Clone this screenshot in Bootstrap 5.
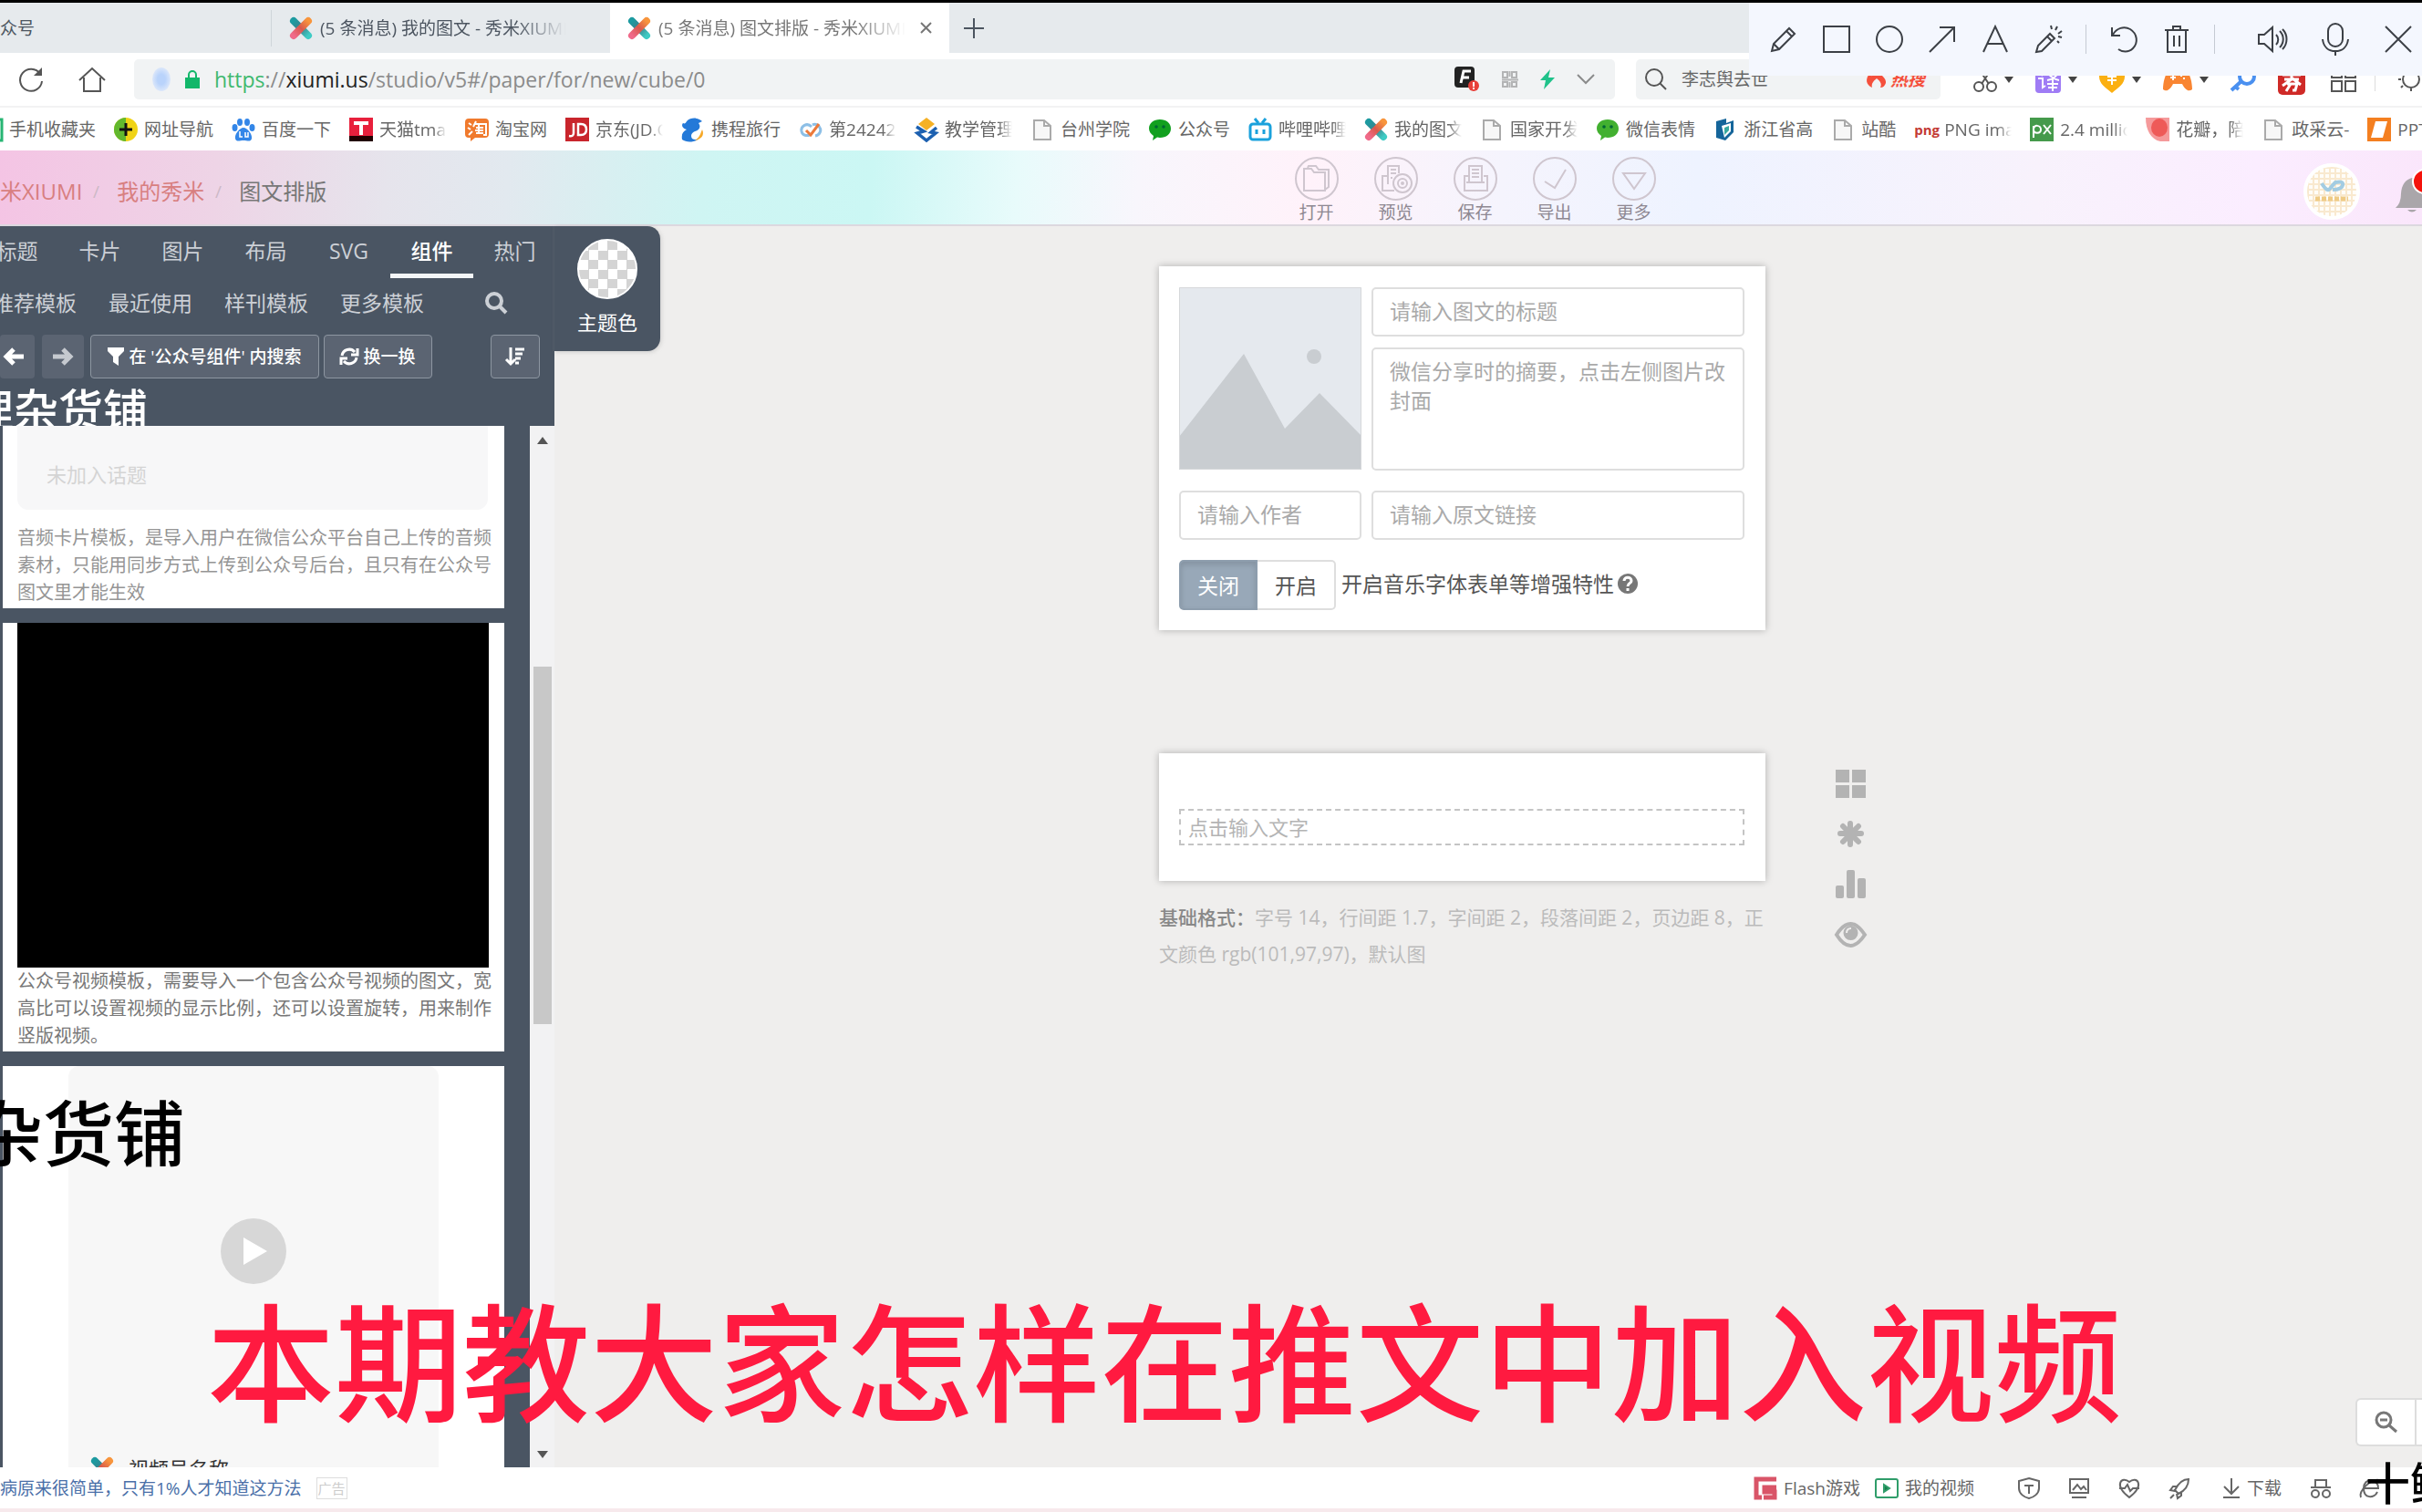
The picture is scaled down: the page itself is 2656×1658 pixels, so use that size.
<!DOCTYPE html>
<html lang="zh-CN">
<head>
<meta charset="utf-8">
<meta name="viewport" content="width=device-width, initial-scale=1">
<title>图文排版 - 秀米XIUMI</title>
<link href="https://cdn.jsdelivr.net/npm/bootstrap@5.3.0/dist/css/bootstrap.min.css" rel="stylesheet">
<style>
  body { font-family: "Open Sans", "Noto Sans CJK SC", sans-serif; font-size: 19px; line-height: 30px; color: #555; background: #efeeed; }
  a { color: inherit; text-decoration: none; }
  svg { display: block; flex: none; overflow: visible; }
  button { font: inherit; color: inherit; border: 0; background: none; padding: 0; }
  .ln { fill: none; stroke: currentColor; stroke-width: 2; }

  /* browser chrome */
  .tabstrip { height: 58px; background: #e6eaed; border-top: 3px solid #000; color: #4c5560; }
  .tab-a { width: 298px; border-right: 1px solid #cfd5da; height: 40px; }
  .tab-b { width: 371px; padding: 0 48px 0 19px; }
  .tab-c { width: 372px; padding: 0 19px; background: #fff; color: #777; }
  .fade-end { overflow: hidden; -webkit-mask-image: linear-gradient(90deg, #000 80%, transparent); mask-image: linear-gradient(90deg, #000 80%, transparent); }
  .addr { height: 60px; background: #fff; border-bottom: 2px solid #f2f2f3; color: #555; }
  .nav-ic { width: 67px; }
  .urlbox { height: 44px; background: #f1f3f4; border-radius: 5px; margin-left: 13px; padding: 0 22px 0 20px; font-size: 23px; color: #8b8b8b; }
  .urlbox b { font-weight: 400; color: #222; }
  .urlbox i { font-style: normal; color: #3fb96f; }
  .glow { width: 20px; height: 26px; border-radius: 50%; background: radial-gradient(#b9d3fb 30%, #dfe9fa 75%); }
  .hotbox { width: 334px; height: 44px; background: #f1f3f4; border-radius: 5px; margin-left: 23px; padding: 0 17px 0 10px; }
  .hotbox input { border: 0; background: none; width: 160px; padding: 0; color: #666; }
  .hot { color: #f5503c; font-weight: 700; font-style: italic; }
  .exts { width: 528px; padding-left: 36px; }
  .caret { border: 5px solid transparent; border-top: 7px solid #444; border-bottom: 0; margin-left: 8px; }
  .exts .sep { width: 1px; height: 26px; background: #ddd; margin: 0 13px 0 20px; flex: none; }
  .marks { height: 47px; background: #fff; color: #666; gap: 20px; }
  .marks a { display: flex; align-items: center; gap: 7px; flex: none; }
  .marks a:first-child { margin-left: -23px; }
  .marks svg { width: 26px; height: 26px; }
  .marks .fade-end { width: 74px; }

  .drawbar { position: absolute; top: 3px; right: 0; width: 738px; height: 80px; background: #f4f7fe; color: #3c4046; padding-left: 9px; overflow: hidden; z-index: 5; }
  .drawbar button { width: 58px; flex: none; display: flex; justify-content: center; }
  .drawbar .wide { width: 69px; }
  .drawbar .bar { width: 1px; height: 32px; background: #c5cad3; margin: 0 12px; flex: none; }

  /* site header */
  .sitebar { height: 83px; border-bottom: 2px solid #dcd8df; background: linear-gradient(94deg, #f4c4e4 0, #eed4e6 9%, #e6e4ec 16%, #e2e9ef 21%, #cff5f3 29%, #cbf7f4 36%, #e8fbfb 42%, #f8f6fc 47%, #fff2fa 54%, #f5f4fd 62%, #eef3ff 70%, #f8f2fc 84%, #fbedff 93%, #fae6fb 100%); }
  .crumbs { width: 1400px; font-size: 24px; color: #777; padding-top: 9px; }
  .crumbs a { color: #d87f80; }
  .crumbs a.home { margin-left: -24px; }
  .crumbs span { font-size: 19px; color: #ccb9c6; width: 38px; text-align: center; padding-right: 8px; }
  .acts a { width: 87px; display: flex; flex-direction: column; align-items: center; line-height: 26px; padding-top: 7px; color: #8e8892; }
  .acts svg { color: #cfc6cf; }
  .avatar { width: 62px; height: 62px; border-radius: 50%; border: 4px solid #fff; background: repeating-linear-gradient(90deg, #f9e9cf 0 2px, transparent 2px 6px), repeating-linear-gradient(#f9e9cf 0 2px, #fffdf8 2px 6px); }

  /* template drawer */
  .drawer { width: 608px; background: #4a5563; color: #ccd0d6; font-size: 23px; }
  .kinds { margin-left: -27px; width: 637px; height: 57px; }
  .kinds a { width: 91px; height: 57px; padding-top: 12px; text-align: center; border-bottom: 5px solid transparent; }
  .kinds a.on { color: #fff; font-weight: 500; border-bottom-color: #f4f6f8; }
  .subs { height: 55px; gap: 35px; margin-left: -8px; padding-right: 52px; padding-bottom: 2px; }
  .tools { height: 62px; padding: 7px 16px 7px 0; font-size: 19px; font-weight: 500; color: #fff; }
  .tools button { height: 48px; background: #5b6472; border-radius: 4px; display: flex; align-items: center; justify-content: center; gap: 5px; }
  .tools .edged { border: 1px solid #8d96a1; }
  .shopname { height: 45px; font-size: 49px; line-height: 54px; font-weight: 500; color: #fff; margin-left: -34px; white-space: nowrap; }
  .list { padding-left: 3px; gap: 16px; font-size: 20px; }
  .tpl { width: 550px; background: #fff; padding: 0 14px 2px 16px; color: #777; flex: none; }
  .tpl.pale { color: #959595; }
  .tpl.last { flex: 1 0 0; padding: 0 72px; overflow: hidden; }
  .topic { height: 92px; margin: 0 4px 16px 0; padding: 38px 32px 0; background: #f7f7f8; border-radius: 0 0 12px 12px; font-size: 22px; color: #d4d4d4; }
  .video { height: 378px; background: #000; margin-right: 3px; }
  .channel { height: 100%; background: #f7f7f7; border-radius: 12px 12px 0 0; padding-top: 167px; }
  .play { width: 72px; height: 72px; border-radius: 50%; background: #d7d7d7; margin: 0 auto 187px; }
  .who { gap: 16px; padding-left: 24px; font-size: 22px; color: #333; }
  .sbar { width: 27px; background: #f2f2f3; padding: 12px 0 10px; }
  .sbar .thumb { width: 20px; height: 392px; background: #c8c8c8; margin-top: 244px; }
  .sbar .up { border: 6px solid transparent; border-bottom: 8px solid #555; border-top: 0; }
  .sbar .dn { border: 6px solid transparent; border-top: 8px solid #555; border-bottom: 0; margin-top: auto; }
  .theme { position: absolute; left: 608px; top: 0; width: 116px; height: 137px; background: #4a5563; border-radius: 0 14px 14px 0; color: #fff; font-size: 22px; padding-top: 14px; z-index: 2; box-shadow: 1px 1px 4px #9996; }
  .swatch { width: 66px; height: 66px; border-radius: 50%; border: 2px solid #fff; background: repeating-conic-gradient(#d4d4d4 0 25%, #fff 0 50%) 0 0 / 21px 21px; margin: 0 auto 10px; }

  /* editor */
  .stage { padding: 44px 57px 0 0; display: grid; grid-template-columns: minmax(0, 1fr) 665px minmax(0, 1fr); align-content: start; row-gap: 135px; overflow: hidden; }
  .mid { grid-column: 2; }
  .sheet { background: #fff; box-shadow: 0 0 8px #0004; }
  .meta { padding: 23px 23px 22px 22px; display: grid; grid-template-columns: 200px 1fr; column-gap: 11px; row-gap: 22px; font-size: 23px; }
  .meta .form-control { height: 54px; padding: 9px 18px 11px; font-size: 23px; line-height: 32px; border: 2px solid #dedede; border-radius: 5px; color: #555; background: #fff; }
  .meta .form-control::placeholder { color: #aaa; opacity: 1; }
  .meta textarea.form-control { height: 135px; resize: none; padding: 8px 18px; }
  .onoff label { width: 86px; height: 55px; border: 2px solid #dedede; display: flex; align-items: center; justify-content: center; color: #555; }
  .onoff label:first-of-type { background: #98a8b8; border-color: #8d9dad; color: #fff; border-radius: 5px 0 0 5px; box-shadow: inset 0 3px 6px #0002; }
  .onoff label:last-of-type { border-left: 0; border-radius: 0 5px 5px 0; }
  .onoff .hint { margin-left: 6px; padding-bottom: 3px; }
  .paper { padding: 61px 23px 39px 22px; }
  .typein { height: 40px; width: 100%; border: 2px dashed #c4c4c4; padding: 0 8px; font-size: 22px; background: none; }
  .typein::placeholder { color: #b4b4b4; }
  .fmt { margin: 20px 0 0; font-size: 21px; line-height: 40px; color: #bbb; }
  .fmt b { font-weight: 500; color: #888; }
  .rail { padding: 6px 0 0 63px; color: #b3b3b3; }
  .rail button { display: flex; width: 60px; height: 55px; align-items: center; justify-content: center; }
  .zoomer { position: absolute; right: -57px; bottom: 23px; }
  .zoomer button { width: 65px; height: 53px; background: #fff; border: 2px solid #ddd; display: flex; align-items: center; justify-content: center; color: #777; }
  .zoomer button:first-child { border-radius: 6px 0 0 6px; border-right: 0; }

  .foot { height: 49px; background: #fff; border-bottom: 4px solid #f7e9ec; color: #666; }
  .foot .ad { font-size: 15px; line-height: 22px; border: 1px solid #ddd; color: #ccc; padding: 0 1px; }
  .foot a, .foot button { display: flex; align-items: center; gap: 7px; }

  /* video captions */
  .cap { position: absolute; white-space: nowrap; font-weight: 500; z-index: 6; pointer-events: none; }
  .cap-red { left: 227px; bottom: 94px; font-size: 140px; line-height: 140px; color: #ff1a40; }
  .cap-shop { left: -31px; top: 1200px; font-size: 78px; line-height: 86px; color: #000; }
  .cap-ten { left: 2594px; bottom: 2px; font-size: 49px; line-height: 60px; color: #000; }
</style>
</head>
<body class="vh-100 d-flex flex-column overflow-hidden position-relative">

<svg width="0" height="0" class="position-absolute">
  <defs>
    <linearGradient id="ga" x1="0" y1="0" x2="1" y2="1"><stop offset="0" stop-color="#1d9aa0"/><stop offset=".5" stop-color="#3f7f8a"/><stop offset="1" stop-color="#3ecbc4"/></linearGradient>
    <linearGradient id="gb" x1="1" y1="0" x2="0" y2="1"><stop offset="0" stop-color="#f8953c"/><stop offset=".5" stop-color="#d9584c"/><stop offset="1" stop-color="#f06a8a"/></linearGradient>
    <symbol id="xm" viewBox="0 0 26 26"><path d="M5 5 21 21" stroke="url(#ga)" stroke-width="8" stroke-linecap="round"/><path d="M21 5 14 12M12 14 5 21" stroke="url(#gb)" stroke-width="8" stroke-linecap="round"/></symbol>
    <symbol id="pg" viewBox="0 0 26 26"><path d="M4 3h11l7 6v15H4z M15 3v6h7" fill="#f7f7f7" stroke="#aaa" stroke-width="2"/></symbol>
    <symbol id="wx" viewBox="0 0 26 26"><path d="M13 2c7 0 12 4 12 10s-5 10-12 10l-3-.4L5 25l1-5C3 18 1 15 1 12 1 6 6 2 13 2z"/><circle cx="9" cy="10" r="1.8" fill="#063"/><circle cx="17" cy="10" r="1.8" fill="#063"/></symbol>
  </defs>
</svg>

<div class="tabstrip d-flex align-items-center flex-shrink-0">
  <a href="#" class="tab-a d-flex align-items-center">众号</a>
  <a href="#" class="tab-b d-flex align-items-center gap-2"><svg width="26" height="26"><use href="#xm"/></svg><span class="fade-end text-nowrap">(5 条消息) 我的图文 - 秀米XIUMI</span></a>
  <div class="tab-c d-flex align-items-center h-100"><svg width="26" height="26"><use href="#xm"/></svg><span class="fade-end text-nowrap ms-2 me-3">(5 条消息) 图文排版 - 秀米XIUMI</span>
    <button class="flex-shrink-0" aria-label="关闭标签"><svg class="ln" width="13" height="13"><path d="M1 1 12 12M12 1 1 12"/></svg></button></div>
  <button class="ms-3" aria-label="新标签"><svg class="ln" width="22" height="22"><path d="M11 0v22M0 11h22"/></svg></button>
</div>

<div class="drawbar d-flex align-items-center">
  <button aria-label="画笔"><svg class="ln" width="30" height="30"><path d="M2 28 4 20 21 3l6 6L10 26z M18 6l6 6M4 20l6 6"/></svg></button>
  <button aria-label="矩形"><svg class="ln" width="30" height="30"><rect x="1" y="1" width="28" height="28"/></svg></button>
  <button aria-label="圆形"><svg class="ln" width="30" height="30"><circle cx="15" cy="15" r="14"/></svg></button>
  <button aria-label="箭头"><svg class="ln" width="30" height="30"><path d="M1 29 28 2M12 2h16v16"/></svg></button>
  <button aria-label="文字"><svg class="ln" width="30" height="30"><path d="M2 29 15 1l13 28M6 20h18"/></svg></button>
  <button aria-label="魔棒"><svg class="ln" width="30" height="30"><path d="M2 29 4 22 17 9l5 5L8 28z M14 12l5 5M18 0l1 4M25 1l-2 4M30 6l-4 3M30 13l-4-1M27 19l-2-2"/></svg></button>
  <span class="bar"></span>
  <button aria-label="撤销"><svg class="ln" width="30" height="30"><path d="M2 2v9h9M3 10C7 3 15 0 22 4c8 5 9 15 3 21-5 5-12 4-16 1"/></svg></button>
  <button aria-label="删除"><svg class="ln" width="26" height="30"><path d="M0 5h26M9 5V1h8v4M3 5v24h20V5M10 11v12M16 11v12"/></svg></button>
  <span class="bar"></span><span class="me-3"></span>
  <button class="wide" aria-label="声音"><svg class="ln" width="32" height="30"><path d="M1 10h6l9-8v26l-9-8H1zM20 10c3 3 3 8 0 11M24 6c5 5 5 13 0 18M27 4c6 6 6 16 0 22"/></svg></button>
  <button class="wide" aria-label="麦克风"><svg class="ln" width="32" height="36"><rect x="8" y="1" width="16" height="25" rx="8"/><path d="M2 18c1 9 7 13 14 13s13-4 14-13M16 31v5"/></svg></button>
  <button class="wide" aria-label="关闭"><svg class="ln" width="30" height="30"><path d="M1 1 29 29M29 1 1 29"/></svg></button>
</div>

<div class="addr d-flex align-items-center flex-shrink-0">
  <button class="nav-ic d-flex justify-content-center" aria-label="刷新"><svg class="ln" width="28" height="28"><path d="M24 8a12 12 0 1 0 2 8"/><path d="M26 1v9h-9z" fill="currentColor" stroke="none"/></svg></button>
  <button class="nav-ic d-flex justify-content-center" aria-label="主页"><svg class="ln" width="30" height="28"><path d="M1 15 15 2l14 13M6 12v15h18V12"/></svg></button>
  <div class="urlbox d-flex align-items-center flex-grow-1">
    <span class="glow"></span>
    <svg class="ms-3" width="16" height="20"><path d="M0 8h16v12H0z" fill="#12b76a"/><path d="M4 9V5a4 4 0 0 1 8 0v4" fill="none" stroke="#12b76a" stroke-width="2"/></svg>
    <span class="ms-3 me-auto"><i>https</i>://<b>xiumi.us</b>/studio/v5#/paper/for/new/cube/0</span>
    <svg width="28" height="28"><rect width="22" height="23" rx="4" fill="#222"/><path d="M7 18 10 5h8M8 12h8" stroke="#fff" stroke-width="3" fill="none"/><circle cx="21" cy="21" r="6" fill="#e8403a"/><path d="M21 17v5M21 23v2" stroke="#fff" stroke-width="2"/></svg>
    <svg class="ln ms-4" width="18" height="18" stroke-opacity=".6"><path d="M1 1h5v6H1zM11 1h5v6h-5zM1 12h5v5H1zM11 12h5v5h-5zM0 9.500h18M8.500 0v6M8.500 12v6"/></svg>
    <svg class="ms-4" width="16" height="22"><path d="M11 0 0 12h6l-2 10L16 9H9z" fill="#1fc28a"/></svg>
    <svg class="ln ms-4" width="20" height="12"><path d="M1 1l9 9 9-9"/></svg>
  </div>
  <div class="hotbox d-flex align-items-center">
    <svg class="ln" width="24" height="24"><circle cx="10" cy="10" r="9"/><path d="M16 16l7 7"/></svg>
    <label class="visually-hidden" for="hs">搜索</label><input id="hs" class="ms-3" value="李志舆去世">
    <span class="hot ms-auto d-flex align-items-center"><svg width="22" height="18" class="me-1"><path d="M6 18C-1 15-2 8 4 2c0 4 2 4 3 1l3-3c5 3 12 8 11 13-1 3-3 5-6 5 2-4 0-7-4-10-4 3-6 6-5 10z" fill="#f5503c"/></svg>热搜</span>
  </div>
  <div class="exts d-flex align-items-center flex-shrink-0">
    <svg class="ln" width="26" height="28"><path d="M5 1l12 18M21 1 9 19"/><circle cx="6" cy="22" r="5"/><circle cx="20" cy="22" r="5"/></svg><span class="caret"></span>
    <svg class="ms-4" width="28" height="30"><rect width="28" height="30" rx="4" fill="#9f7cf5"/><path d="M4 8l4 3M3 14h5v10l3-2M13 7h12c-2 6-6 8-12 9M14 8c3 5 7 7 12 8M13 20h12M19 15v13M14 24h10" stroke="#fff" stroke-width="2" fill="none"/></svg><span class="caret"></span>
    <svg class="ms-4" width="28" height="30"><path d="M0 0h28v12c0 8-7 12-14 18C7 24 0 20 0 12z" fill="#fbb012"/><path d="M9 4l5 6 5-6M14 10v11M9 12h10M9 16h10" stroke="#fff" stroke-width="2" fill="none"/></svg><span class="caret"></span>
    <svg class="ms-4" width="32" height="28"><path d="M8 3c5 2 11 2 16 0 6 4 8 15 8 22-5 4-9-2-11-6H11C9 23 5 29 0 25 0 18 2 7 8 3z" fill="#f98532"/><path d="M8 12h6M11 9v6M19 10h2M22 13h2" stroke="#fff" stroke-width="2"/></svg><span class="caret"></span>
    <svg class="ms-4" width="28" height="28"><circle cx="18" cy="11" r="8" fill="none" stroke="#4a90f0" stroke-width="4"/><path d="M12 16 1 26M5 22l4 3" stroke="#4a90f0" stroke-width="4"/></svg>
    <svg class="ms-4" width="30" height="34"><rect width="30" height="34" rx="5" fill="#cf2a27"/><path d="M8 6l3 5M22 6l-3 5M5 12h20M7 17h16M15 7v10L5 24M16 16l9 7M10 22h11l-2 7h-3M14 22l-5 8" stroke="#fff" stroke-width="3" fill="none"/></svg>
    <svg class="ln" width="28" height="28" style="margin-left:28px"><path d="M1 1h11v11H1zM16 1h11v11H16zM1 16h11v11H1zM16 16h11v11H16z"/></svg>
    <span class="sep"></span>
    <svg class="ln" width="28" height="28"><circle cx="26" cy="14" r="9"/><path d="M12 14h3M26 24v3M15 23l2-2"/></svg>
  </div>
</div>

<div class="marks d-flex align-items-center flex-shrink-0 overflow-hidden text-nowrap">
  <a href="#"><svg><rect x="2" y="2" width="23" height="23" fill="none" stroke="#27b573" stroke-width="3"/></svg>手机收藏夹</a>
  <a href="#"><svg><circle cx="13" cy="13" r="13" fill="#f0d315"/><path d="M13 0a13 13 0 0 0 0 26z" fill="#62b82e"/><path d="M13 6v14M6 13h14" stroke="#111" stroke-width="3"/></svg>网址导航</a>
  <a href="#"><svg fill="#3386e8"><ellipse cx="9" cy="5" rx="3" ry="4"/><ellipse cx="17" cy="5" rx="3" ry="4"/><ellipse cx="3.500" cy="11" rx="3" ry="4"/><ellipse cx="22.500" cy="11" rx="3" ry="4"/><path d="M13 11c4 0 10 7 9 12-1 4-5 2-9 2s-8 2-9-2c-1-5 5-12 9-12z"/><path d="M9 15v6h3M15 16v5h3v-5" stroke="#fff" fill="none" stroke-width="1.500"/></svg>百度一下</a>
  <a href="#"><svg><path d="M0 0h26v26H0z" fill="#e8203c"/><path d="M0 20h26v6H0z" fill="#200"/><path d="M5 6h16M13 6v13" stroke="#fff" stroke-width="4"/></svg><span class="fade-end">天猫tmall</span></a>
  <a href="#"><svg><path d="M4 1h18q4 0 4 4v13q0 4-4 4H11l-5 4v-4H4q-4 0-4-4V5q0-4 4-4z" fill="#f07a2d"/><path d="M4 6l3 2M3 11l3 2M4 19l4-4M12 4l-3 6M11 7h12v12h-3M12 11h8M11 14h9M15 8v9M12 17h8" stroke="#fff" stroke-width="2" fill="none"/></svg>淘宝网</a>
  <a href="#"><svg><path d="M0 0h26v26H0z" fill="#c9252c"/><path d="M9 6v11q0 4-5 3M14 7h3q6 0 6 6t-6 6h-3z" stroke="#fff" stroke-width="2.500" fill="none"/></svg><span class="fade-end">京东(JD.C</span></a>
  <a href="#"><svg><path d="M1 24C0 18 2 15 6 13 1 12 0 8 2 6c2 1 3 0 4-2 5-5 13-4 17 0l-4 2c3 4 1 8-4 9-4 2-5 5-3 8 3 2 6 1 8-1-3 5-14 6-19 2z" fill="#2479d8"/><path d="M23 13c3 6-1 11-8 12 5-3 6-7 8-12z" fill="#f7a928"/></svg>携程旅行</a>
  <a href="#"><svg fill="none" stroke-width="3"><path d="M14 10C9 5 2 9 3 15c1 5 6 5 9 4M15 8c3-2 7 0 8 3 2 3 0 8-5 9" stroke="#8dbfe6"/><path d="M8 14l5 5L22 7" stroke="#ec7a3b"/></svg><span class="fade-end">第242422</span></a>
  <a href="#"><svg><path d="M13 0l9 7-9 7-9-7z" fill="#f5b125"/><path d="M2 10l8 5-7 2 10 8 10-8-5-1 6-5" fill="none" stroke="#1c60b0" stroke-width="3.500"/></svg><span class="fade-end">教学管理系</span></a>
  <a href="#"><svg><use href="#pg"/></svg>台州学院</a>
  <a href="#"><svg fill="#12a01f"><use href="#wx"/></svg>公众号</a>
  <a href="#"><svg fill="none" stroke="#1aa1dc" stroke-width="3"><rect x="2" y="7" width="22" height="17" rx="3"/><path d="M7 1l4 5M19 1l-4 5M9 13v5M17 13v5"/></svg><span class="fade-end">哔哩哔哩干</span></a>
  <a href="#"><svg><use href="#xm"/></svg><span class="fade-end">我的图文</span></a>
  <a href="#"><svg><use href="#pg"/></svg><span class="fade-end">国家开发</span></a>
  <a href="#"><svg fill="#42b030"><use href="#wx"/></svg>微信表情</a>
  <a href="#"><svg><path d="M3 4 14 1v5l8-3v13l-9 9-10-3z" fill="#15659a"/><path d="M9 9l10-3v9l-7 7z" fill="#fff"/><path d="M12 11l5-2v5l-5 5z" fill="#39a9a0"/></svg>浙江省高</a>
  <a href="#"><svg><use href="#pg"/></svg>站酷</a>
  <a href="#"><b style="color:#c33a35;font-size:15px;width:26px">png</b><span class="fade-end">PNG image</span></a>
  <a href="#"><svg><path d="M0 0h26v26H0z" fill="#459a4b"/><path d="M4 22V9M4 13c0-6 8-5 8 0s-8 5-8 0M15 8l8 10M23 8l-8 10" stroke="#fff" stroke-width="2" fill="none"/></svg><span class="fade-end">2.4 million</span></a>
  <a href="#"><svg><path d="M0 0h26v26H16C6 24 0 14 0 0z" fill="#f59a9b"/><ellipse cx="15" cy="11" rx="9" ry="10" fill="#ee5a58"/></svg><span class="fade-end">花瓣，陪你</span></a>
  <a href="#"><svg><use href="#pg"/></svg>政采云-</a>
  <a href="#"><svg><path d="M0 0h26v26H0z" fill="#f47f20"/><path d="M9 4h13l-5 18H4z" fill="#fff"/></svg>PPT</a>
</div>

<header class="sitebar d-flex flex-shrink-0 overflow-hidden">
  <nav class="crumbs d-flex align-items-center flex-shrink-0" aria-label="breadcrumb">
    <a class="home" href="#">秀米XIUMI</a><span>/</span><a href="#">我的秀米</a><span>/</span>图文排版
  </nav>
  <div class="acts d-flex">
    <a href="#"><svg class="ln" width="48" height="48"><circle cx="24" cy="24" r="23"/><path d="M10 13h8l3 4h12v20H10zM14 12l1-2h8l3 4h11v19l-4 3"/></svg>打开</a>
    <a href="#"><svg class="ln" width="48" height="48"><circle cx="24" cy="24" r="23"/><path d="M14 21H9v16h13M15 30V10h12v8M18 14h6M18 18h6M18 23h2"/><circle cx="31" cy="29" r="10"/><circle cx="31" cy="29" r="5"/><circle cx="31" cy="29" r="1"/></svg>预览</a>
    <a href="#"><svg class="ln" width="48" height="48"><circle cx="24" cy="24" r="23"/><path d="M16 21h-4v16h25V21h-4M17 28V10h14v18M20 14h8M20 18h8M20 22h8M14 28h20"/></svg>保存</a>
    <a href="#"><svg class="ln" width="48" height="48"><circle cx="24" cy="24" r="23"/><path d="M13 27l11 7 12-20"/></svg>导出</a>
    <a href="#"><svg class="ln" width="48" height="48"><circle cx="24" cy="24" r="23"/><path d="M12 18h24L24 35z"/></svg>更多</a>
  </div>
  <div class="d-flex align-items-center ms-auto flex-shrink-0 pt-2">
    <a href="#" class="avatar d-block" aria-label="账号"><svg width="54" height="54"><path d="M16 18q6 10 9 6t6-7q9-2 8 3t-11 5" fill="none" stroke="#a3cce2" stroke-width="4"/><path d="M9 35h36" stroke="#efcb85" stroke-width="5" stroke-dasharray="5 2"/></svg></a>
    <svg width="30" height="52" style="margin-left:38px"><path d="M1 44q6-5 6-16 1-14 12-17 12 3 13 17 0 11 6 16z" fill="#aaa6aa"/><path d="M14 46q5 5 10 0z" fill="#aaa6aa"/><circle cx="33" cy="15" r="13" fill="#f5130c" stroke="#fff" stroke-width="2"/></svg>
  </div>
</header>

<div class="d-flex flex-grow-1 position-relative" style="min-height:0">
  <aside class="drawer d-flex flex-column flex-shrink-0">
    <div class="overflow-hidden flex-shrink-0">
      <nav class="kinds d-flex">
        <a href="#">标题</a><a href="#">卡片</a><a href="#">图片</a><a href="#">布局</a><a href="#">SVG</a><a href="#" class="on">组件</a><a href="#">热门</a>
      </nav>
    </div>
    <nav class="subs d-flex align-items-center text-nowrap flex-shrink-0">
      <a href="#">推荐模板</a><a href="#">最近使用</a><a href="#">样刊模板</a><a href="#">更多模板</a>
      <button class="ms-auto" aria-label="搜索"><svg width="24" height="24" fill="none" stroke="currentColor" stroke-width="4"><circle cx="10" cy="10" r="8"/><path d="M16 16l7 7"/></svg></button>
    </nav>
    <div class="tools d-flex flex-shrink-0">
      <button aria-label="后退" class="pe-2" style="width:38px"><svg width="22" height="20" fill="none" stroke="#fff" stroke-width="5"><path d="M22 10H4M11 2l-8 8 8 8"/></svg></button>
      <button class="ms-2" aria-label="前进" style="width:46px"><svg width="22" height="20" fill="none" stroke="#c5c9cf" stroke-width="5"><path d="M0 10h18M11 2l8 8-8 8"/></svg></button>
      <button class="edged text-nowrap" style="width:251px;margin-left:7px"><svg width="18" height="20" fill="#fff"><path d="M0 0h18v4l-6 6v10l-6-4v-6L0 4z"/></svg>在 '公众号组件' 内搜索</button>
      <button class="edged" style="width:119px;margin-left:5px"><svg width="20" height="20" fill="none" stroke="#fff" stroke-width="3"><path d="M2 9a8 8 0 0 1 14-4M18 11a8 8 0 0 1-14 4M19 1v7h-7M1 19v-7h7"/></svg>换一换</button>
      <button class="edged ms-auto" aria-label="排序" style="width:54px"><svg width="20" height="20" fill="none" stroke="#fff" stroke-width="3"><path d="M5 0v17M0 13l5 5 5-5M10 2h10M10 7h8M10 12h6M10 17h4"/></svg></button>
    </div>
    <div class="overflow-hidden flex-shrink-0"><div class="shopname">理杂货铺</div></div>
    <div class="d-flex flex-grow-1" style="min-height:0">
      <div class="list d-flex flex-column flex-grow-1 overflow-hidden">
        <article class="tpl pale"><div class="topic">未加入话题</div>音频卡片模板，是导入用户在微信公众平台自己上传的音频素材，只能用同步方式上传到公众号后台，且只有在公众号图文里才能生效</article>
        <article class="tpl"><div class="video"></div>公众号视频模板，需要导入一个包含公众号视频的图文，宽高比可以设置视频的显示比例，还可以设置旋转，用来制作竖版视频。</article>
        <article class="tpl last"><div class="channel">
          <div class="play d-flex align-items-center justify-content-center"><svg width="26" height="30" class="ms-1"><path d="M0 0 26 15 0 30z" fill="#fff"/></svg></div>
          <div class="who d-flex align-items-center"><svg width="26" height="26"><use href="#xm"/></svg>视频号名称</div>
        </div></article>
      </div>
      <div class="sbar d-flex flex-column align-items-center"><span class="up"></span><span class="thumb"></span><span class="dn"></span></div>
    </div>
  </aside>
  <div class="theme text-center"><div class="swatch"></div>主题色</div>

  <main class="stage flex-grow-1 position-relative">
    <form class="mid sheet meta">
      <svg width="200" height="200"><path d="M0 0h200v200H0z" fill="#e5e9ee"/><path d="M0 164 71 73l45 82 38-39 46 47v37H0z" fill="#c9cdd1"/><circle cx="148" cy="76" r="8" fill="#c9cdd1"/><path d="M.5.5h199v199H.5z" fill="none" stroke="#d6d8da"/></svg>
      <div class="d-flex flex-column" style="gap:12px">
        <input class="form-control" aria-label="标题" placeholder="请输入图文的标题">
        <textarea class="form-control" aria-label="摘要" placeholder="微信分享时的摘要，点击左侧图片改封面"></textarea>
      </div>
      <input class="form-control" aria-label="作者" placeholder="请输入作者">
      <input class="form-control" aria-label="原文链接" placeholder="请输入原文链接">
      <div class="onoff d-flex align-items-center text-nowrap" style="grid-column:1/-1">
        <input class="visually-hidden" type="radio" name="fx" id="fx0" checked><label for="fx0">关闭</label>
        <input class="visually-hidden" type="radio" name="fx" id="fx1"><label for="fx1">开启</label>
        <span class="hint d-flex align-items-center gap-1">开启音乐字体表单等增强特性
        <svg width="22" height="22"><circle cx="11" cy="11" r="11" fill="#777"/><path d="M7 8c0-5 8-5 8 0 0 3-4 2-4 6M11 16v3" stroke="#fff" stroke-width="3" fill="none"/></svg></span>
      </div>
    </form>
    <section class="mid">
      <div class="sheet paper"><input class="typein d-block" aria-label="正文" placeholder="点击输入文字"></div>
      <p class="fmt"><b>基础格式：</b>字号 14，行间距 1.7，字间距 2，段落间距 2，页边距 8，正文颜色 rgb(101,97,97)，默认图</p>
    </section>
    <div class="rail">
      <button aria-label="布局"><svg width="33" height="31" fill="currentColor"><path d="M0 0h15v14H0zM18 0h15v14H18zM0 17h15v14H0zM18 17h15v14H18z"/></svg></button>
      <button aria-label="特效"><svg width="29" height="29" stroke="currentColor" stroke-width="6" stroke-linecap="round"><path d="M14 3v23M3 14h23M6 6l17 17M23 6 6 23"/></svg></button>
      <button aria-label="统计"><svg width="33" height="31" fill="currentColor"><rect y="17" width="9" height="14" rx="2"/><rect x="12" width="9" height="31" rx="2"/><rect x="24" y="9" width="9" height="22" rx="2"/></svg></button>
      <button aria-label="预览"><svg width="35" height="28"><path d="M2 14q15-24 31 0-16 24-31 0z" fill="none" stroke="currentColor" stroke-width="4"/><circle cx="17.500" cy="12" r="8" fill="currentColor"/><path d="M13 12q0-5 5-5" stroke="#efeeed" stroke-width="2" fill="none"/></svg></button>
    </div>
    <div class="zoomer d-flex"><button aria-label="缩小"><svg width="24" height="24" fill="none" stroke="currentColor" stroke-width="3"><circle cx="9" cy="9" r="8"/><path d="M15 15l8 7M5 9h8"/></svg></button><button aria-label="100%"></button></div>
  </main>
</div>

<footer class="foot d-flex align-items-center flex-shrink-0 text-nowrap">
  <a href="#" style="color:#4a6fa8">病原来很简单，只有1%人才知道这方法</a><span class="ad ms-3">广告</span>
  <a href="#" class="ms-auto"><svg width="26" height="26" fill="none" stroke="#d95568" stroke-width="5"><path d="M25 3H3v20h6M25 12H12v5h11v6H11"/></svg>Flash游戏</a>
  <a href="#" class="ms-3"><svg width="26" height="22" fill="none" stroke="#2f9d6a" stroke-width="2"><rect x="1" y="1" width="24" height="20" rx="2"/><path d="M10 7v8l6-4z" fill="#17804c"/></svg>我的视频</a>
  <div class="d-flex align-items-center" style="gap:32px;margin-left:48px;width:443px">
    <button aria-label="安全"><svg class="ln" width="24" height="24"><path d="M12 1l11 3v8c0 6-6 10-11 11C7 22 1 18 1 12V4zM7 9h10M12 9v9"/></svg></button>
    <button aria-label="图片"><svg class="ln" width="22" height="22"><path d="M1 1h20v15H1zM4 13l5-6 4 5 3-3 3 4M3 21h16"/></svg></button>
    <button aria-label="健康"><svg class="ln" width="24" height="22"><path d="M12 21C-6 7 4-3 12 4c8-7 18 3 0 17zM1 11h6l3-4 3 7 3-3h7"/></svg></button>
    <button aria-label="加速"><svg class="ln" width="22" height="22"><path d="M21 1c-8 0-12 6-15 12l4 4C16 14 21 9 21 1zM8 9H4l-3 4 5 1M13 15v4l-4 3-1-5M1 22l4-4"/></svg></button>
    <button aria-label="下载" class="ms-1"><svg class="ln" width="20" height="22"><path d="M10 0v16M2 9l8 8 8-8M1 21h18"/></svg>下载</button>
    <button aria-label="无痕"><svg class="ln" width="22" height="22"><path d="M5 10V2h12v8M0 10h22"/><circle cx="5" cy="17" r="4"/><circle cx="17" cy="17" r="4"/></svg></button>
    <button aria-label="内核"><svg class="ln" width="22" height="22"><path d="M3 11h17c0-12-16-12-16 0s12 11 15 4M1 21C-2 14 12 0 21 2"/></svg></button>
  </div>
</footer>

<div class="cap cap-shop">杂货铺</div>
<div class="cap cap-red">本期教大家怎样在推文中加入视频</div>
<div class="cap cap-ten">十鲤</div>

<script src="https://cdn.jsdelivr.net/npm/bootstrap@5.3.0/dist/js/bootstrap.bundle.min.js"></script>
</body>
</html>
